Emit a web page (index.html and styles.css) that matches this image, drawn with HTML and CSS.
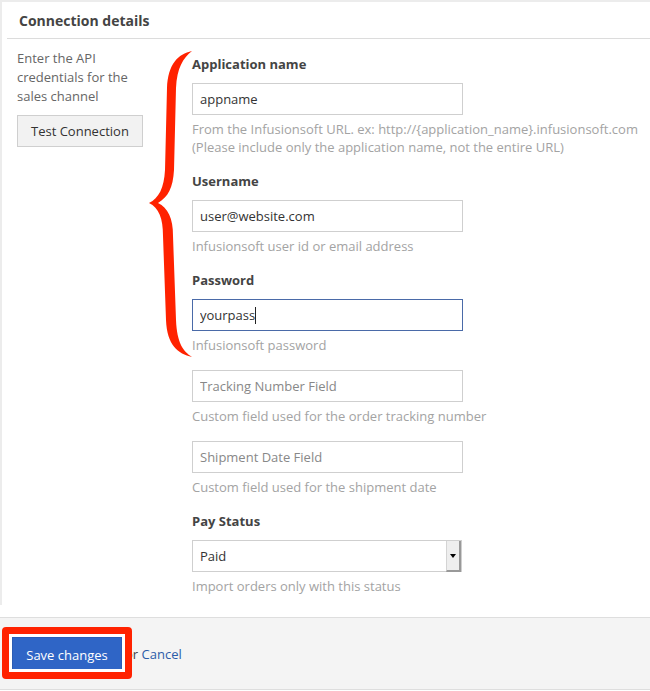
FILE: index.html
```html
<!DOCTYPE html>
<html lang="en">
<head>
<meta charset="utf-8">
<title>Connection details</title>
<link rel="stylesheet" href="styles.css">
</head>
<body>
<div class="page">
  <section class="panel">
    <header class="panel-head"><h2 class="panel-title">Connection details</h2></header>
    <div class="panel-body">
      <aside class="intro">
        <p class="intro-text">Enter the API credentials for the sales channel</p>
        <button class="btn-test" type="button">Test Connection</button>
      </aside>
      <div class="fields">
        <div class="field">
          <label class="field-label">Application name</label>
          <input class="text-input" type="text" value="appname">
          <p class="help">From the Infusionsoft URL. ex: http://{application_name}.infusionsoft.com<br>(Please include only the application name, not the entire URL)</p>
        </div>
        <div class="field">
          <label class="field-label">Username</label>
          <input class="text-input" type="text" value="user@website.com">
          <p class="help">Infusionsoft user id or email address</p>
        </div>
        <div class="field">
          <label class="field-label">Password</label>
          <div class="input-wrap">
            <input class="text-input is-focused" type="text" value="yourpass">
            <span class="caret"></span>
          </div>
          <p class="help">Infusionsoft password</p>
        </div>
        <div class="field">
          <input class="text-input" type="text" placeholder="Tracking Number Field">
          <p class="help">Custom field used for the order tracking number</p>
        </div>
        <div class="field">
          <input class="text-input" type="text" placeholder="Shipment Date Field">
          <p class="help">Custom field used for the shipment date</p>
        </div>
        <div class="field">
          <label class="field-label">Pay Status</label>
          <div class="select-wrap">
            <select class="select-input"><option>Paid</option></select>
            <span class="select-arrow"><span class="tri"></span></span>
          </div>
          <p class="help">Import orders only with this status</p>
        </div>
      </div>
    </div>
  </section>
  <footer class="actions">
    <button class="btn-save" type="button">Save changes</button>
    <span class="or">or <a class="cancel" href="#">Cancel</a></span>
    <span class="highlight-box"></span>
  </footer>
  <svg class="brace" viewBox="146 48 50 314" width="50" height="314" aria-hidden="true">
    <path fill="#ff2200" d="M192,51 C178,54 168,64 167,88 L165,170 C164,188 159,198 149,203 C159,208 163,218 163,236 L166,320 C167,345 178,354 192,357 C183,351 177,343 176,320 L173,236 C173,218 168,208 158,203 C168,197 173,188 174,170 L176,88 C177,68 183,58 192,51 Z"/>
  </svg>
</div>
</body>
</html>
```

FILE: styles.css
```css
* { box-sizing: border-box; }

html, body {
  margin: 0;
  padding: 0;
  background: #fff;
}

body {
  font-family: "Open Sans", "Noto Sans", sans-serif;
  font-size: 13px;
  color: #444;
}

.page {
  position: relative;
  width: 650px;
}

.panel {
  border-top: 2px solid #ececec;
  border-left: 2px solid #ececec;
  padding-bottom: 10px;
}

.panel-head {
  margin-left: 5px;
  padding-left: 12px;
  height: 37px;
  border-bottom: 1px solid #dcdcdc;
}

.panel-title {
  margin: 0;
  font-size: 14px;
  font-weight: 700;
  line-height: 37px;
  color: #444;
}

.panel-body {
  display: flex;
}

.intro {
  flex: 0 0 190px;
  padding: 10px 0 0 15px;
}

.intro-text {
  margin: 0;
  width: 125px;
  font-size: 13px;
  line-height: 19px;
  color: #666;
}

.btn-test {
  margin-top: 9px;
  height: 32px;
  padding: 0 13px;
  font-family: inherit;
  font-size: 13px;
  color: #333;
  background: #f2f2f2;
  border: 1px solid #cfcfcf;
  border-radius: 0;
}

.fields {
  flex: 1;
  padding-top: 16px;
}

.field {
  margin-bottom: 16px;
}

.field:last-child {
  margin-bottom: 0;
}

.field-label {
  display: block;
  margin-bottom: 10px;
  font-weight: 700;
  font-size: 13px;
  line-height: 18px;
  color: #444;
}

.text-input,
.select-input {
  display: block;
  width: 271px;
  height: 32px;
  margin: 0;
  padding: 0 7px;
  font-family: inherit;
  font-size: 13px;
  color: #333;
  background: #fff;
  border: 1px solid #cfcfcf;
  border-radius: 0;
  outline: none;
}

.text-input::placeholder {
  color: #888;
}

.text-input.is-focused {
  border-color: #4a6aa8;
}

.input-wrap,
.select-wrap {
  position: relative;
  width: 271px;
}

.caret {
  position: absolute;
  left: 63px;
  top: 8px;
  width: 1px;
  height: 17px;
  background: #222;
}

.select-input {
  width: 270px;
  -webkit-appearance: none;
  appearance: none;
}

.select-arrow {
  position: absolute;
  top: 1px;
  right: 2px;
  width: 15px;
  height: 31px;
  background: #eee;
  border-left: 1px solid #d4d4d4;
  border-right: 2px solid #999;
  border-bottom: 2px solid #999;
  display: flex;
  align-items: center;
  justify-content: center;
}

.tri {
  width: 0;
  height: 0;
  border-left: 3px solid transparent;
  border-right: 3px solid transparent;
  border-top: 4px solid #000;
}

.help {
  margin: 5px 0 0;
  font-size: 13px;
  line-height: 18px;
  color: #a3a3a3;
  white-space: nowrap;
}

.actions {
  position: relative;
  margin-top: 12px;
  height: 73px;
  padding: 19px 0 0 12px;
  background: #f4f4f4;
  border-top: 1px solid #dedede;
  border-bottom: 1px solid #dedede;
  display: flex;
  align-items: flex-start;
}

.btn-save {
  height: 35px;
  width: 110px;
  padding: 0;
  font-family: inherit;
  font-size: 13px;
  color: #fff;
  background: #2f65c6;
  border: 1px solid #2a5cb5;
  border-radius: 0;
}

.or {
  margin-left: 3px;
  font-size: 13px;
  line-height: 35px;
  color: #444;
}

.cancel {
  color: #2c5ca8;
  text-decoration: none;
}

.highlight-box {
  position: absolute;
  left: 2px;
  top: 9px;
  width: 130px;
  height: 52px;
  border: 7px solid #ff2200;
  border-radius: 4px;
  box-shadow: inset 0 0 0 3px #fff;
}

.brace {
  position: absolute;
  left: 146px;
  top: 48px;
}
```
